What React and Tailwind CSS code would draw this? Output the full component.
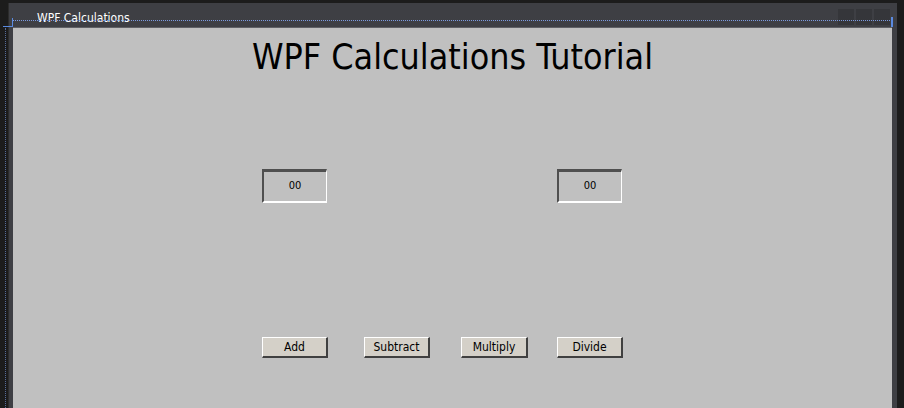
import React from "react";

const font = { fontFamily: '"DejaVu Sans Condensed", "DejaVu Sans", Tahoma, sans-serif' };

function NumberBox({ value }) {
  return (
    <div className="w-[65px] h-[34px] flex items-center justify-center bg-[#c0c0c0] border-t-[3px] border-l-2 border-b-2 border-r border-t-[#4f4f4f] border-l-[#4f4f4f] border-b-white border-r-white text-[11px] text-black">
      {value}
    </div>
  );
}

function WinButton({ label, className }) {
  return (
    <button
      className={
        "h-[21px] flex items-center justify-center bg-[#d4d0c8] border-t border-l border-b-2 border-r-2 border-t-white border-l-white border-b-[#404040] border-r-[#404040] text-[12px] text-black " +
        className
      }
    >
      {label}
    </button>
  );
}

export default function App() {
  return (
    <div className="w-[904px] h-[408px] bg-[#1c1c1c] overflow-hidden relative" style={font}>
      {/* designer adorners */}
      <div className="absolute left-[5px] top-[28px] bottom-0 border-l border-dotted border-[#6f8fd0] opacity-70" />
      <div className="absolute left-[3px] top-[26px] w-[10px] border-t border-[#5a8ae0]" />
      <div className="absolute left-[12px] top-[18px] h-[9px] border-l border-[#5a8ae0]" />
      <div className="absolute left-[891px] top-[17px] h-[10px] border-l-2 border-[#5a8ae0]" />

      <div className="ml-[8px] mt-[3px] w-[889px] h-[405px] bg-[#3e3f44] border-l border-[#2c2c2c] flex flex-col">
        {/* title bar */}
        <div className="h-[24px] relative flex items-start shrink-0">
          <span className="ml-[28px] mt-[8px] text-[12px] leading-[14px] text-white">WPF Calculations</span>
          <div className="absolute left-[4px] right-[7px] top-[17px] border-t border-dotted border-[#7d9be0]" />
          <div className="ml-auto mr-[7px] mt-[6px] flex gap-[2px]">
            <div className="w-[16px] h-[16px] bg-[#35363a]" />
            <div className="w-[16px] h-[16px] bg-[#35363a]" />
            <div className="w-[16px] h-[16px] bg-[#35363a]" />
          </div>
        </div>

        {/* client area */}
        <div className="ml-[4px] mr-[5px] flex-1 bg-[#c0c0c0] border-t border-[#606166] flex flex-col">
          <h1 className="text-center text-[35.5px] leading-[40px] mt-[9px] text-black">WPF Calculations Tutorial</h1>

          <div className="flex mt-[92px] pl-[249px]">
            <NumberBox value="00" />
            <div className="ml-[230px]">
              <NumberBox value="00" />
            </div>
          </div>

          <div className="flex mt-[134px] pl-[249px]">
            <WinButton label="Add" className="w-[66px]" />
            <WinButton label="Subtract" className="w-[66px] ml-[36px]" />
            <WinButton label="Multiply" className="w-[67px] ml-[31px]" />
            <WinButton label="Divide" className="w-[66px] ml-[29px]" />
          </div>
        </div>
      </div>
    </div>
  );
}
